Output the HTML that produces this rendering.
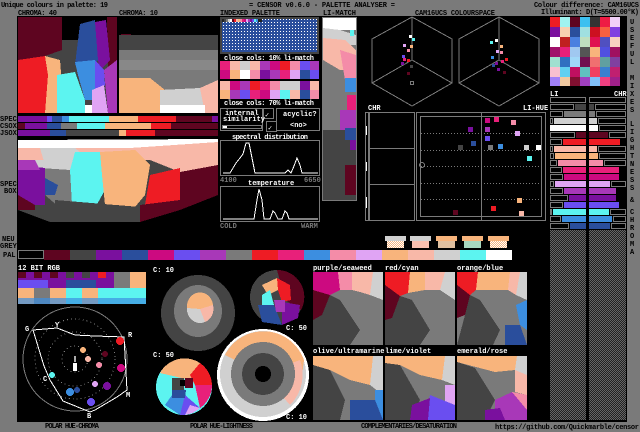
<!DOCTYPE html>
<html><head><meta charset="utf-8"><style>
html,body{margin:0;padding:0;background:#7a7a7a;}
svg{display:block}
text{font-family:"Liberation Mono",monospace;font-size:7px;font-weight:bold;}
</style></head><body>
<svg width="640" height="432" viewBox="0 0 640 432" xmlns="http://www.w3.org/2000/svg" shape-rendering="crispEdges">
<defs>
<pattern id="ck" width="2" height="2" patternUnits="userSpaceOnUse"><rect width="2" height="2" fill="#222"/><rect width="1" height="1" fill="#666"/><rect x="1" y="1" width="1" height="1" fill="#666"/></pattern>
<pattern id="dots" width="3" height="3" patternUnits="userSpaceOnUse"><rect width="3" height="3" fill="#2a4e9c"/><rect x="1" y="1" width="1" height="1" fill="#fff"/></pattern>
<pattern id="ckp" width="2" height="2" patternUnits="userSpaceOnUse"><rect width="2" height="2" fill="#f8b47c"/><rect width="1" height="1" fill="#fff"/><rect x="1" y="1" width="1" height="1" fill="#fff"/></pattern>
</defs>
<rect width="640" height="432" fill="#7a7a7a"/>
<text x="1" y="7" textLength="107">Unique colours in palette: 19</text>
<text x="249" y="7" textLength="146">= CENSOR v0.6.0 - PALETTE ANALYSER =</text>
<text x="534" y="7" textLength="105">Colour difference: CAM16UCS</text>
<text x="541" y="14" textLength="98">Illuminant: D(T=5500.00°K)</text>
<text x="18" y="15" textLength="39">CHROMA: 40</text>
<text x="119" y="15" textLength="39">CHROMA: 10</text>
<text x="220" y="15" textLength="60">INDEXED PALETTE</text>
<text x="323" y="15" textLength="33">LI-MATCH</text>
<text x="415" y="15" textLength="80">CAM16UCS COLOURSPACE</text>
<rect x="17" y="16" width="610" height="406" fill="#000"/>
<text x="0" y="121">SPEC</text><text x="0" y="128">CSOX</text><text x="0" y="135">JSOX</text>
<text x="0" y="186">SPEC</text><text x="4" y="193">BOX</text>
<text x="2" y="241">NEU</text><text x="0" y="248">GREY</text><text x="3" y="257">PAL</text>

<g>
<rect x="18" y="17" width="99" height="96" fill="#444"/>
<polygon points="18,17 62,17 62,50 45,56 18,60" fill="#5e0520"/>
<polygon points="62,17 117,17 117,40 62,40" fill="#000"/>
<polygon points="107,17 117,17 117,113 110,113 108,70" fill="#5e0520"/>
<polygon points="80,24 95,20 98,60 90,70 75,65" fill="#2a4e9c"/>
<polygon points="95,22 106,20 110,60 100,70 98,60" fill="#7a109e"/>
<polygon points="18,60 45,56 50,75 45,113 18,113" fill="#ee1c24"/>
<polygon points="45,56 60,60 62,85 57,113 45,113 48,75" fill="#f8b47c"/>
<polygon points="57,75 75,72 85,100 85,113 57,113" fill="#5cf4f0"/>
<polygon points="75,62 95,60 95,100 85,100 78,75" fill="#3c8ee0"/>
<polygon points="95,60 104,70 105,85 95,100" fill="#6a4ef0"/>
<polygon points="92,90 104,85 108,113 92,113" fill="#e0a4f4"/>
<polygon points="104,70 117,60 117,113 108,113" fill="#a838b8"/>
<polygon points="85,105 92,105 92,113 85,113" fill="#fff"/>
</g>
<g>
<rect x="119" y="17" width="99" height="96" fill="#7a7a7a"/>
<rect x="119" y="17" width="99" height="18" fill="#000"/>
<rect x="121" y="34" width="10" height="4" fill="#5e0520"/>
<rect x="119" y="35" width="99" height="15" fill="#444"/>
<rect x="119" y="60" width="99" height="10" fill="#888"/>
<polygon points="119,78 150,78 165,90 160,113 119,113" fill="#f8b47c"/>
<polygon points="160,90 200,88 205,105 160,105" fill="#d0d0d0"/>
<polygon points="200,88 218,80 218,113 205,113" fill="#f8b8a8"/>
<rect x="160" y="105" width="45" height="8" fill="#fff"/>
</g>
<g>
<rect x="18" y="116" width="200" height="6" fill="#5e0520"/>
<rect x="18" y="116" width="29" height="6" fill="#7a109e"/><rect x="47" y="116" width="5" height="6" fill="#6a4ef0"/><rect x="52" y="116" width="10" height="6" fill="#2a4e9c"/><rect x="62" y="116" width="7" height="6" fill="#3c8ee0"/><rect x="69" y="116" width="40" height="6" fill="#5cf4f0"/><rect x="109" y="116" width="29" height="6" fill="#f8b47c"/><rect x="138" y="116" width="38" height="6" fill="#ee1c24"/><rect x="212" y="116" width="6" height="6" fill="#7a109e"/>
<rect x="18" y="123" width="200" height="6" fill="#5e0520"/>
<rect x="25" y="123" width="22" height="6" fill="#7a109e"/><rect x="47" y="123" width="14" height="6" fill="#2a4e9c"/><rect x="61" y="123" width="16" height="6" fill="#7a7a7a"/><rect x="77" y="123" width="28" height="6" fill="#5cf4f0"/><rect x="105" y="123" width="46" height="6" fill="#f8b47c"/><rect x="151" y="123" width="20" height="6" fill="#ee1c24"/>
<rect x="18" y="130" width="200" height="6" fill="#5e0520"/>
<rect x="18" y="130" width="32" height="6" fill="#7a109e"/><rect x="50" y="130" width="16" height="6" fill="#2a4e9c"/><rect x="66" y="130" width="53" height="6" fill="#444"/><rect x="119" y="130" width="7" height="6" fill="#f8b47c"/><rect x="126" y="130" width="29" height="6" fill="#ee1c24"/>
</g>
<g>
<rect x="18" y="139" width="200" height="83" fill="#000"/>
<polygon points="18,140 218,139 218,170 180,175 150,200 140,222 50,222 18,210" fill="#444"/>
<polygon points="18,140 70,140 80,160 60,180 40,190 18,175" fill="#d0d0d0"/>
<polygon points="18,140 40,140 45,160 18,160" fill="#f8b8a8"/>
<polygon points="18,140 218,139 218,148 18,148" fill="#fff"/>
<polygon points="40,148 130,148 218,142 218,168 180,172 150,160 110,162 70,165" fill="#f8b8a8"/>
<polygon points="40,148 75,148 90,160 60,170 45,165" fill="#d0d0d0"/>
<polygon points="75,152 100,152 105,190 95,208 72,205 70,170" fill="#5cf4f0"/>
<polygon points="100,152 135,150 150,165 145,195 135,207 105,205 102,175" fill="#f8b47c"/>
<polygon points="40,168 70,170 72,205 60,208 45,195" fill="#7a7a7a"/>
<polygon points="18,165 45,168 45,205 35,205 18,195" fill="#7a109e"/>
<polygon points="18,160 35,160 40,170 18,170" fill="#a838b8"/>
<polygon points="45,178 58,185 55,195 45,195" fill="#2a4e9c"/>
<polygon points="150,175 180,168 182,200 170,210 145,205" fill="#ee1c24"/>
<polygon points="180,172 218,165 218,185 180,200" fill="#5e0520"/>
<polygon points="140,205 180,200 218,185 218,195 180,210 140,222" fill="#5e0520"/>
<polygon points="18,195 35,205 35,210 18,210" fill="#5e0520"/>
<polygon points="55,200 140,207 138,222 55,220" fill="#444"/>
</g>
<rect x="220" y="17" width="99" height="37" fill="#444"/>
<rect x="222" y="19" width="95" height="33" fill="url(#dots)"/>
<g>
<rect x="222" y="19" width="40" height="3" fill="#222"/>
<rect x="224" y="19" width="2" height="3" fill="#444"/><rect x="226" y="19" width="2" height="3" fill="#7a7a7a"/><rect x="228" y="19" width="2" height="3" fill="#d0d0d0"/><rect x="230" y="19" width="2" height="3" fill="#fff"/><rect x="232" y="19" width="2" height="3" fill="#5e0520"/><rect x="234" y="19" width="2" height="3" fill="#ee1c24"/><rect x="236" y="19" width="2" height="3" fill="#f8b8a8"/><rect x="238" y="19" width="2" height="3" fill="#f8b47c"/><rect x="240" y="19" width="2" height="3" fill="#f48ca8"/><rect x="242" y="19" width="2" height="3" fill="#e8207a"/><rect x="244" y="19" width="2" height="3" fill="#cc0a80"/><rect x="246" y="19" width="2" height="3" fill="#e0a4f4"/><rect x="248" y="19" width="2" height="3" fill="#a838b8"/><rect x="250" y="19" width="2" height="3" fill="#7a109e"/><rect x="252" y="19" width="2" height="3" fill="#6a4ef0"/><rect x="254" y="19" width="2" height="3" fill="#5cf4f0"/><rect x="256" y="19" width="2" height="3" fill="#3c8ee0"/>
</g>
<text x="224" y="60" fill="#fff" textLength="90">close cols: 10% li-match</text>
<g>
<rect x="220" y="61" width="10" height="9" fill="#e8207a"/><rect x="220" y="70" width="10" height="9" fill="#cc0a80"/>
<rect x="230" y="61" width="10" height="9" fill="#f8b8a8"/><rect x="230" y="70" width="10" height="9" fill="#f8b47c"/>
<rect x="240" y="61" width="10" height="9" fill="#d0d0d0"/><rect x="240" y="70" width="10" height="9" fill="#fff"/>
<rect x="250" y="61" width="10" height="9" fill="#f8b8a8"/><rect x="250" y="70" width="10" height="9" fill="#f48ca8"/>
<rect x="260" y="61" width="10" height="9" fill="#a838b8"/><rect x="260" y="70" width="10" height="9" fill="#7a109e"/>
<rect x="270" y="61" width="10" height="9" fill="#cc0a80"/><rect x="270" y="70" width="10" height="9" fill="#a838b8"/>
<rect x="280" y="61" width="10" height="9" fill="#ee1c24"/><rect x="280" y="70" width="10" height="9" fill="#e8207a"/>
<rect x="290" y="61" width="10" height="9" fill="#f48ca8"/><rect x="290" y="70" width="10" height="9" fill="#e0a4f4"/>
<rect x="300" y="61" width="10" height="9" fill="#6a4ef0"/><rect x="300" y="70" width="10" height="9" fill="#2a4e9c"/>
<rect x="310" y="61" width="9" height="9" fill="#a838b8"/><rect x="310" y="70" width="9" height="9" fill="#6a4ef0"/>
<rect x="220" y="81" width="10" height="9" fill="#f8b8a8"/><rect x="220" y="90" width="10" height="9" fill="#f8b47c"/>
<rect x="230" y="81" width="10" height="9" fill="#cc0a80"/><rect x="230" y="90" width="10" height="9" fill="#a838b8"/>
<rect x="240" y="81" width="10" height="9" fill="#a838b8"/><rect x="240" y="90" width="10" height="9" fill="#6a4ef0"/>
<rect x="250" y="81" width="10" height="9" fill="#ee1c24"/><rect x="250" y="90" width="10" height="9" fill="#e8207a"/>
<rect x="260" y="81" width="10" height="9" fill="#e8207a"/><rect x="260" y="90" width="10" height="9" fill="#cc0a80"/>
<rect x="270" y="81" width="10" height="9" fill="#f48ca8"/><rect x="270" y="90" width="10" height="9" fill="#e0a4f4"/>
<rect x="280" y="81" width="10" height="9" fill="#d0d0d0"/><rect x="280" y="90" width="10" height="9" fill="#5cf4f0"/>
<rect x="290" y="81" width="10" height="9" fill="#d0d0d0"/><rect x="290" y="90" width="10" height="9" fill="#f8b8a8"/>
<rect x="300" y="81" width="10" height="9" fill="#7a109e"/><rect x="300" y="90" width="10" height="9" fill="#2a4e9c"/>
<rect x="310" y="81" width="9" height="9" fill="#f8b8a8"/><rect x="310" y="90" width="9" height="9" fill="#f48ca8"/>
</g>
<text x="224" y="105" fill="#fff" textLength="90">close cols: 70% li-match</text>
<g fill="none" stroke="#7a7a7a">
<rect x="220.5" y="108.5" width="42" height="22"/>
<rect x="263.5" y="108.5" width="10" height="10"/>
<rect x="266.5" y="121.5" width="10" height="10"/>
<rect x="276.5" y="108.5" width="43" height="22"/>
<rect x="222.5" y="125.5" width="39" height="3"/>
<rect x="220.5" y="140.5" width="99" height="35"/>
<rect x="220.5" y="186.5" width="99" height="35"/>
<rect x="322.5" y="17.5" width="34" height="183"/>
</g>
<rect x="223" y="126" width="4" height="2" fill="#fff"/>
<text x="225" y="115" fill="#fff">internal</text><text x="223" y="121" fill="#fff">similarity</text>
<text x="265" y="117" fill="#fff">✓</text><text x="268" y="130" fill="#fff">✓</text>
<text x="283" y="116" fill="#fff">acyclic?</text><text x="290" y="127" fill="#fff">&lt;no&gt;</text>
<text x="232" y="139" fill="#fff" textLength="76">spectral distribution</text>
<text x="220" y="182" fill="#7a7a7a">4100</text><text x="304" y="182" fill="#7a7a7a">6650</text>
<text x="248" y="185" fill="#fff">temperature</text>
<text x="220" y="228" fill="#7a7a7a">COLD</text><text x="301" y="228" fill="#7a7a7a">WARM</text>
<polyline fill="none" stroke="#fff" points="223,173 230,173 236,163 240,158 243,154 246,143 249,143 252,158 255,173 285,173 288,170 291,173 294,166 297,158 300,165 302,173 318,173"/>
<polyline fill="none" stroke="#fff" points="223,219 254,219 257,200 259,189 262,200 264,219 270,219 273,211 275,213 278,219 282,219 285,211 287,213 289,219 318,219"/>
<g>
<rect x="323" y="18" width="33" height="182" fill="#7a7a7a"/>
<rect x="323" y="18" width="33" height="12" fill="#fff"/>
<polygon points="323,28 340,30 356,35 356,45 323,45" fill="#d0d0d0"/>
<polygon points="323,38 345,40 356,50 356,70 340,70 323,60" fill="#f8b8a8"/>
<polygon points="340,50 356,55 356,80 345,80" fill="#f48ca8"/>
<rect x="345" y="78" width="11" height="14" fill="#3c8ee0"/>
<polygon points="323,60 340,70 345,90 340,110 323,120" fill="#7a7a7a"/>
<rect x="347" y="95" width="9" height="20" fill="#e8207a"/>
<rect x="340" y="110" width="16" height="20" fill="#a838b8"/>
<rect x="323" y="130" width="33" height="70" fill="#444"/>
<rect x="345" y="128" width="11" height="12" fill="#2a4e9c"/>
<rect x="350" y="140" width="6" height="10" fill="#7a109e"/>
<rect x="345" y="165" width="11" height="30" fill="#5e0520"/>
<rect x="350" y="30" width="4" height="6" fill="#5cf4f0"/>
</g>
<g fill="none" stroke="#7a7a7a">
<polygon points="412,17 452,39 452,83 412,106 372,83 372,39"/>
<line x1="412" y1="17" x2="412" y2="60"/><line x1="412" y1="60" x2="452" y2="83"/>
<line x1="412" y1="60" x2="372" y2="83"/>
<polygon points="499,17 539,39 539,83 499,106 459,83 459,39"/>
<line x1="499" y1="17" x2="499" y2="60"/><line x1="499" y1="60" x2="539" y2="83"/><line x1="499" y1="60" x2="459" y2="83"/>
<rect x="410.5" y="81.5" width="3" height="3"/>
</g>
<g>
<rect x="409" y="35" width="3" height="3" fill="#fff"/><rect x="412" y="38" width="3" height="3" fill="#5cf4f0"/><rect x="403" y="44" width="3" height="3" fill="#e0a4f4"/><rect x="410" y="45" width="3" height="3" fill="#f8b47c"/><rect x="407" y="49" width="3" height="3" fill="#f48ca8"/><rect x="402" y="55" width="3" height="3" fill="#6a4ef0"/><rect x="403" y="58" width="3" height="3" fill="#e8207a"/><rect x="407" y="59" width="3" height="3" fill="#ee1c24"/><rect x="401" y="62" width="3" height="3" fill="#7a109e"/><rect x="410" y="65" width="3" height="3" fill="#444"/><rect x="407" y="72" width="3" height="3" fill="#5e0520"/>
<rect x="495" y="39" width="3" height="3" fill="#fff"/><rect x="490" y="41" width="3" height="3" fill="#5cf4f0"/><rect x="500" y="45" width="3" height="3" fill="#f8b47c"/><rect x="496" y="50" width="3" height="3" fill="#e0a4f4"/><rect x="500" y="51" width="3" height="3" fill="#f48ca8"/><rect x="491" y="56" width="3" height="3" fill="#3c8ee0"/><rect x="505" y="58" width="3" height="3" fill="#ee1c24"/><rect x="501" y="60" width="3" height="3" fill="#e8207a"/><rect x="495" y="62" width="3" height="3" fill="#7a109e"/><rect x="492" y="64" width="3" height="3" fill="#2a4e9c"/><rect x="497" y="68" width="3" height="3" fill="#7a109e"/><rect x="503" y="71" width="3" height="3" fill="#5e0520"/>
</g>
<text x="368" y="110" fill="#fff">CHR</text><text x="523" y="110" fill="#fff">LI-HUE</text>
<g fill="none" stroke="#7a7a7a">
<rect x="365.5" y="112.5" width="3" height="108"/>
<rect x="369.5" y="112.5" width="45" height="108"/>
<line x1="369" y1="148.5" x2="415" y2="148.5"/><line x1="369" y1="184.5" x2="415" y2="184.5"/>
<rect x="416.5" y="112.5" width="129" height="108"/>
<rect x="420.5" y="116.5" width="121" height="100"/>
<line x1="481.5" y1="113" x2="481.5" y2="221"/>
<circle cx="422" cy="165" r="2.5"/>
</g>
<g stroke="#7a7a7a" stroke-dasharray="1 2">
<line x1="421" y1="133.5" x2="541" y2="133.5"/><line x1="421" y1="150.5" x2="541" y2="150.5"/><line x1="421" y1="166.5" x2="541" y2="166.5"/><line x1="421" y1="183.5" x2="541" y2="183.5"/><line x1="421" y1="199.5" x2="541" y2="199.5"/>
</g>
<rect x="366" y="126" width="1" height="9" fill="#fff"/><rect x="366" y="162" width="1" height="9" fill="#fff"/><rect x="366" y="197" width="1" height="11" fill="#fff"/>
<g>
<rect x="485" y="118" width="5" height="5" fill="#cc0a80"/><rect x="494" y="117" width="5" height="5" fill="#e8207a"/><rect x="511" y="120" width="5" height="5" fill="#f48ca8"/><rect x="468" y="127" width="5" height="5" fill="#7a109e"/><rect x="485" y="127" width="5" height="5" fill="#a838b8"/><rect x="515" y="131" width="5" height="5" fill="#e0a4f4"/><rect x="485" y="136" width="5" height="5" fill="#6a4ef0"/><rect x="471" y="141" width="5" height="5" fill="#2a4e9c"/><rect x="458" y="145" width="5" height="5" fill="#444"/><rect x="488" y="145" width="5" height="5" fill="#7a7a7a"/><rect x="498" y="144" width="5" height="5" fill="#3c8ee0"/><rect x="524" y="145" width="5" height="5" fill="#d0d0d0"/><rect x="536" y="145" width="5" height="5" fill="#fff"/><rect x="527" y="156" width="5" height="5" fill="#5cf4f0"/><rect x="517" y="198" width="5" height="5" fill="#f8b47c"/><rect x="453" y="210" width="5" height="5" fill="#5e0520"/><rect x="491" y="206" width="5" height="5" fill="#ee1c24"/><rect x="519" y="211" width="5" height="5" fill="#f8b8a8"/>
</g>
<g>
<rect x="550" y="17" width="76" height="69" fill="#444"/>
<rect x="550" y="17" width="10" height="10" fill="#ee1c24"/><rect x="560" y="17" width="10" height="10" fill="#a0f4f0"/><rect x="570" y="17" width="10" height="10" fill="#5e0520"/><rect x="580" y="17" width="10" height="10" fill="#3cc0f0"/><rect x="590" y="17" width="10" height="10" fill="#333"/><rect x="600" y="17" width="10" height="10" fill="#ee1c44"/><rect x="610" y="17" width="10" height="10" fill="#f0d0f8"/>
<rect x="550" y="27" width="10" height="10" fill="#7a109e"/><rect x="560" y="27" width="10" height="10" fill="#f8d0b0"/><rect x="570" y="27" width="10" height="10" fill="#2a4e9c"/><rect x="580" y="27" width="10" height="10" fill="#a0e0e0"/><rect x="590" y="27" width="10" height="10" fill="#cc1020"/><rect x="600" y="27" width="10" height="10" fill="#f86040"/><rect x="610" y="27" width="10" height="10" fill="#8040e0"/>
<rect x="550" y="37" width="10" height="10" fill="#fff"/><rect x="560" y="37" width="10" height="10" fill="#c02020"/><rect x="570" y="37" width="10" height="10" fill="#4a80e0"/><rect x="580" y="37" width="10" height="10" fill="#c0e0c0"/><rect x="590" y="37" width="10" height="10" fill="#e01050"/><rect x="600" y="37" width="10" height="10" fill="#5050c0"/><rect x="610" y="37" width="10" height="10" fill="#f8d0c0"/>
<rect x="550" y="47" width="10" height="10" fill="#a0106a"/><rect x="560" y="47" width="10" height="10" fill="#e8207a"/><rect x="570" y="47" width="10" height="10" fill="#a0c8f0"/><rect x="580" y="47" width="10" height="10" fill="#555"/><rect x="590" y="47" width="10" height="10" fill="#f8b47c"/><rect x="600" y="47" width="10" height="10" fill="#5050e0"/><rect x="610" y="47" width="10" height="10" fill="#a01060"/>
<rect x="550" y="57" width="10" height="10" fill="#a0e0d0"/><rect x="560" y="57" width="10" height="10" fill="#3070c0"/><rect x="570" y="57" width="10" height="10" fill="#a0d8f8"/><rect x="580" y="57" width="10" height="10" fill="#701050"/><rect x="590" y="57" width="10" height="10" fill="#f07070"/><rect x="600" y="57" width="10" height="10" fill="#60a0a0"/><rect x="610" y="57" width="10" height="10" fill="#8040a0"/>
<rect x="550" y="67" width="10" height="10" fill="#f8c0d0"/><rect x="560" y="67" width="10" height="10" fill="#60d0f0"/><rect x="570" y="67" width="10" height="10" fill="#c01060"/><rect x="580" y="67" width="10" height="10" fill="#60c0c0"/><rect x="590" y="67" width="10" height="10" fill="#f04060"/><rect x="600" y="67" width="10" height="10" fill="#3a80d0"/><rect x="610" y="67" width="10" height="10" fill="#c02070"/>
<rect x="550" y="77" width="10" height="9" fill="#a080f8"/><rect x="560" y="77" width="10" height="9" fill="#f0c8a0"/><rect x="570" y="77" width="10" height="9" fill="#801030"/><rect x="580" y="77" width="10" height="9" fill="#a040c0"/><rect x="590" y="77" width="10" height="9" fill="#80c0f8"/><rect x="600" y="77" width="10" height="9" fill="#f04080"/><rect x="610" y="77" width="10" height="9" fill="#a0208a"/>
<rect x="620" y="17" width="6" height="69" fill="#000"/>
</g>
<g fill="#000">
<text x="630" y="24">U</text><text x="630" y="32">S</text><text x="630" y="40">E</text><text x="630" y="48">F</text><text x="630" y="56">U</text><text x="630" y="64">L</text>
<text x="630" y="80">M</text><text x="630" y="88">I</text><text x="630" y="96">X</text><text x="630" y="104">E</text><text x="630" y="112">S</text>
<text x="630" y="126">L</text><text x="630" y="134">I</text><text x="630" y="142">G</text><text x="630" y="150">H</text><text x="630" y="158">T</text><text x="630" y="166">N</text><text x="630" y="174">E</text><text x="630" y="182">S</text><text x="630" y="190">S</text>
<text x="630" y="202">&amp;</text>
<text x="630" y="214">C</text><text x="630" y="222">H</text><text x="630" y="230">R</text><text x="630" y="238">O</text><text x="630" y="246">M</text><text x="630" y="254">A</text>
</g>
<text x="550" y="96" fill="#fff">LI</text><text x="614" y="96" fill="#fff">CHR</text>
<rect x="550" y="230" width="36" height="190" fill="url(#ck)"/>
<rect x="589" y="230" width="37" height="190" fill="url(#ck)"/>
<g>
<rect x="385" y="236" width="21" height="5" fill="#d0d0d0"/><rect x="387" y="241" width="17" height="7" fill="url(#ckp)"/>
<rect x="410" y="236" width="21" height="5" fill="#d0d0d0"/><rect x="412" y="241" width="17" height="7" fill="#f8c0b0"/>
<rect x="436" y="236" width="21" height="5" fill="#f8b47c"/><rect x="438" y="241" width="17" height="7" fill="#e0c0a0"/>
<rect x="462" y="236" width="21" height="5" fill="#f8b47c"/><rect x="464" y="241" width="17" height="7" fill="#a8d8c0"/>
<rect x="488" y="236" width="21" height="5" fill="#f8b47c"/><rect x="490" y="241" width="17" height="7" fill="url(#ckp)"/>
</g>
<g>
<rect x="18.5" y="250.5" width="25" height="8" fill="#000" stroke="#7a7a7a"/>
<rect x="44" y="250" width="26" height="10" fill="#5e0520"/><rect x="70" y="250" width="26" height="10" fill="#444"/><rect x="96" y="250" width="26" height="10" fill="#7a109e"/><rect x="122" y="250" width="26" height="10" fill="#2a4e9c"/><rect x="148" y="250" width="26" height="10" fill="#cc0a80"/><rect x="174" y="250" width="26" height="10" fill="#6a4ef0"/><rect x="200" y="250" width="26" height="10" fill="#a838b8"/><rect x="226" y="250" width="26" height="10" fill="#7a7a7a"/><rect x="252" y="250" width="26" height="10" fill="#ee1c24"/><rect x="278" y="250" width="26" height="10" fill="#e8207a"/><rect x="304" y="250" width="26" height="10" fill="#3c8ee0"/><rect x="330" y="250" width="26" height="10" fill="#f48ca8"/><rect x="356" y="250" width="26" height="10" fill="#e0a4f4"/><rect x="382" y="250" width="26" height="10" fill="#f8b47c"/><rect x="408" y="250" width="26" height="10" fill="#f8b8a8"/><rect x="434" y="250" width="26" height="10" fill="#d0d0d0"/><rect x="460" y="250" width="26" height="10" fill="#5cf4f0"/><rect x="486" y="250" width="26" height="10" fill="#fff"/>
</g>
<text x="18" y="270" fill="#fff">12 BIT RGB</text>
<g>
<rect x="18" y="272" width="128" height="16" fill="#7a109e"/>
<rect x="18" y="288" width="128" height="16" fill="#f8b47c"/>
<rect x="34" y="288" width="16" height="16" fill="#7a7a7a"/><rect x="66" y="288" width="16" height="16" fill="#5cf4f0"/><rect x="82" y="288" width="16" height="16" fill="#f8b47c"/><rect x="98" y="288" width="48" height="16" fill="#5cf4f0"/>
<rect x="18" y="298" width="128" height="6" fill="#3c8ee0" opacity=".7"/>
<rect x="18" y="272" width="8" height="6" fill="#5e0520"/><rect x="34" y="272" width="8" height="6" fill="#5e0520"/><rect x="50" y="272" width="8" height="6" fill="#5e0520"/><rect x="66" y="272" width="8" height="6" fill="#444"/><rect x="82" y="272" width="8" height="6" fill="#444"/><rect x="98" y="272" width="8" height="6" fill="#ee1c24"/><rect x="114" y="272" width="16" height="16" fill="#7a7a7a"/><rect x="130" y="272" width="16" height="16" fill="#f8b47c"/>
<rect x="18" y="280" width="30" height="8" fill="#6a4ef0"/><rect x="66" y="280" width="30" height="8" fill="#2a4e9c"/>
</g>
<g fill="none">
<circle cx="75" cy="359" r="52" stroke="#7a7a7a"/>
<circle cx="75" cy="359" r="40" stroke="#7a7a7a" stroke-dasharray="1 3"/>
<circle cx="75" cy="359" r="27" stroke="#7a7a7a" stroke-dasharray="1 3"/>
<circle cx="75" cy="359" r="13" stroke="#7a7a7a" stroke-dasharray="1 3"/>
<polyline stroke="#fff" points="33,330 57,328 75,335 95,336 124,337 127,390 117,397 95,410 90,412 63,401 50,380 44,366 33,330"/>
</g>
<text x="25" y="331" fill="#fff">G</text><text x="55" y="327" fill="#fff">Y</text><text x="128" y="337" fill="#fff">R</text><text x="43" y="381" fill="#fff">C</text><text x="126" y="397" fill="#fff">M</text><text x="87" y="418" fill="#fff">B</text>
<g>
<circle cx="120" cy="341" r="4" fill="#ee1c24"/><circle cx="83" cy="350" r="3" fill="#f8b47c"/><circle cx="105" cy="354" r="3" fill="#5e0520"/><circle cx="88" cy="359" r="3" fill="#f8b8a8"/><circle cx="99" cy="365" r="3" fill="#f48ca8"/><circle cx="121" cy="368" r="4" fill="#cc0a80"/><circle cx="52" cy="375" r="3" fill="#5cf4f0"/><circle cx="95" cy="384" r="3" fill="#e0a4f4"/><circle cx="107" cy="386" r="4" fill="#7a109e"/><circle cx="70" cy="392" r="4" fill="#3c8ee0"/><circle cx="77" cy="390" r="3" fill="#2a4e9c"/><circle cx="91" cy="402" r="4" fill="#6a4ef0"/><rect x="73" y="363" width="4" height="8" fill="#fff"/><rect x="74" y="356" width="2" height="6" fill="#aaa"/>
</g>
<text x="153" y="272" fill="#fff">C: 10</text>
<ellipse cx="198" cy="313" rx="37" ry="38" fill="#444"/>
<ellipse cx="198" cy="311" rx="24" ry="26" fill="#7a7a7a"/>
<ellipse cx="200" cy="309" rx="13" ry="14" fill="#d0d0d0"/>
<path d="M187,308 A13,14 0 0 1 213,305 L200,309 Z" fill="#f8b47c"/>
<path d="M213,305 A13,14 0 0 1 205,322 L200,309 Z" fill="#f8b8a8"/>
<circle cx="277" cy="297" r="27" fill="#444"/>
<path d="M277,270 A27,27 0 0 1 301,310 L285,300 Z" fill="#5e0520"/>
<path d="M277,278 L290,285 L291,300 L282,302 L278,290 Z" fill="#ee1c24"/>
<path d="M262,285 L277,278 L278,290 L268,295 Z" fill="#f8b47c"/>
<path d="M262,295 L270,290 L274,305 L262,308 Z" fill="#5cf4f0"/>
<path d="M258,305 L274,305 L282,325 L262,322 Z" fill="#2a4e9c"/>
<path d="M282,302 L300,305 L298,318 L282,325 Z" fill="#7a109e"/>
<path d="M274,300 L285,300 L285,312 L276,312 Z" fill="#a838b8"/>
<text x="286" y="330" fill="#fff">C: 50</text>
<text x="153" y="357" fill="#fff">C: 50</text>
<circle cx="184" cy="387" r="28" fill="#5cf4f0"/>
<path d="M160,373 A28,28 0 0 1 200,363 L190,380 Z" fill="#f8b47c"/>
<path d="M190,375 L200,363 A28,28 0 0 1 212,385 L195,385 Z" fill="#ee1c24"/>
<path d="M195,385 L212,385 A28,28 0 0 1 200,408 Z" fill="#e8207a"/>
<path d="M185,395 L200,408 A28,28 0 0 1 180,415 Z" fill="#6a4ef0"/>
<path d="M190,405 L200,408 A28,28 0 0 1 185,415 Z" fill="#e0a4f4"/>
<path d="M172,395 L185,395 L180,415 L165,405 Z" fill="#3c8ee0"/>
<path d="M172,388 L186,390 L185,398 L172,398 Z" fill="#2a4e9c"/>
<rect x="172" y="378" width="12" height="12" fill="#444"/><rect x="180" y="380" width="5" height="6" fill="#000"/><rect x="185" y="378" width="8" height="10" fill="#5e0520"/>
<circle cx="263" cy="375" r="46" fill="#fff"/>
<circle cx="263" cy="374" r="43" fill="#d0d0d0"/>
<path d="M225,355 A43,43 0 0 1 304,360 L300,390 L263,374 Z" fill="#f8b47c"/>
<path d="M300,360 A43,43 0 0 1 290,405 L263,374 Z" fill="#f8b8a8"/>
<circle cx="263" cy="374" r="32" fill="#7a7a7a"/>
<circle cx="263" cy="374" r="21" fill="#444"/>
<circle cx="263" cy="374" r="8" fill="#000"/>
<text x="286" y="419" fill="#fff">C: 10</text>
<text x="313" y="270" fill="#fff">purple/seaweed</text><text x="385" y="270" fill="#fff">red/cyan</text><text x="457" y="270" fill="#fff">orange/blue</text>
<text x="313" y="353" fill="#fff">olive/ultramarine</text><text x="385" y="353" fill="#fff">lime/violet</text><text x="457" y="353" fill="#fff">emerald/rose</text>
<g>
<rect x="313" y="272" width="70" height="73" fill="#7a7a7a"/>
<polygon points="313,272 338,272 340,290 330,295 313,290" fill="#cc0a80"/><polygon points="338,272 352,272 352,290 340,290" fill="#f48ca8"/><polygon points="352,272 373,272 370,295 360,292 352,290" fill="#f8b8a8"/><polygon points="373,272 383,272 383,300 370,295" fill="#d0d0d0"/>
<polygon points="313,290 330,295 322,315 313,320" fill="#5e0520"/><polygon points="322,315 330,295 340,300 360,330 350,345 313,345 313,320" fill="#444"/>
<rect x="385" y="272" width="70" height="73" fill="#7a7a7a"/>
<polygon points="385,272 410,272 408,293 400,296 385,285" fill="#ee1c24"/><polygon points="410,272 425,272 425,290 408,293" fill="#f8b47c"/><polygon points="425,272 445,272 440,290 425,290" fill="#f8b8a8"/><polygon points="445,272 455,272 455,300 440,290" fill="#d0d0d0"/>
<polygon points="385,285 400,296 392,318 385,320" fill="#5e0520"/><polygon points="392,318 400,296 412,300 430,330 420,345 385,345 385,320" fill="#444"/>
<rect x="457" y="272" width="70" height="73" fill="#7a7a7a"/>
<polygon points="457,272 478,272 476,290 470,295 457,285" fill="#ee1c24"/><polygon points="478,272 510,272 508,290 476,290" fill="#f8b47c"/><polygon points="510,272 520,272 516,295 508,290" fill="#f8b8a8"/><polygon points="520,272 527,272 527,300 516,295" fill="#d0d0d0"/>
<polygon points="457,285 470,295 465,315 457,318" fill="#5e0520"/><polygon points="465,315 470,295 480,300 500,330 493,345 457,345" fill="#444"/>
<polygon points="516,305 527,300 527,330 520,325" fill="#3c8ee0"/><polygon points="505,325 520,325 527,345 505,345" fill="#2a4e9c"/>
<rect x="313" y="356" width="70" height="64" fill="#7a7a7a"/>
<polygon points="313,356 373,356 370,385 350,380 330,370 313,365" fill="#f8b47c"/><polygon points="373,356 383,356 383,395 370,385" fill="#d0d0d0"/>
<polygon points="313,365 330,370 345,400 340,420 313,420" fill="#444"/><polygon points="375,390 383,390 383,420 375,420" fill="#3c8ee0"/><polygon points="350,400 375,400 383,420 350,420" fill="#2a4e9c"/>
<rect x="385" y="356" width="70" height="64" fill="#7a7a7a"/>
<polygon points="385,356 445,356 442,380 420,375 400,365 385,363" fill="#f8b47c"/><polygon points="445,356 455,356 455,385 442,380" fill="#d0d0d0"/>
<polygon points="385,363 400,365 420,400 410,420 385,420" fill="#444"/><polygon points="445,385 455,385 455,410 445,405" fill="#e0a4f4"/><polygon points="430,395 455,405 455,420 425,420" fill="#6a4ef0"/><polygon points="412,405 430,398 428,420 410,420" fill="#7a109e"/>
<rect x="457" y="356" width="70" height="64" fill="#7a7a7a"/>
<polygon points="457,356 517,356 515,370 495,372 457,362" fill="#f8b47c"/><polygon points="517,356 527,356 527,375 515,370" fill="#d0d0d0"/><polygon points="515,370 527,375 527,395 515,392" fill="#f8b8a8"/><polygon points="512,392 527,395 527,410 512,405" fill="#f48ca8"/>
<polygon points="457,362 475,368 495,400 485,420 457,420" fill="#444"/><polygon points="495,400 512,392 527,410 527,420 495,420" fill="#a838b8"/><polygon points="485,410 500,408 505,420 485,420" fill="#7a109e"/>
</g>
<text x="45" y="428" textLength="54">POLAR HUE-CHROMA</text>
<text x="190" y="428" textLength="63">POLAR HUE-LIGHTNESS</text>
<text x="361" y="428" textLength="96">COMPLEMENTARIES/DESATURATION</text>
<text x="495" y="429" textLength="144">https://github.com/Quickmarble/censor</text>
<g fill="none" stroke="#7a7a7a">
<rect x="550.5" y="97.5" width="35" height="5"/><rect x="589.5" y="97.5" width="36" height="5"/>
</g>
<g>
<rect x="550.5" y="104.5" width="23" height="5" fill="none" stroke="#7a7a7a"/><rect x="575" y="104" width="11" height="6" fill="#444"/><rect x="589" y="104" width="5" height="6" fill="#444"/><rect x="595.5" y="104.5" width="30" height="5" fill="none" stroke="#7a7a7a"/>
<rect x="550.5" y="111.5" width="12" height="5" fill="none" stroke="#7a7a7a"/><rect x="564" y="111" width="22" height="6" fill="#7a7a7a"/><rect x="589" y="111" width="6" height="6" fill="#7a7a7a"/><rect x="596.5" y="111.5" width="29" height="5" fill="none" stroke="#7a7a7a"/>
<rect x="550.5" y="118.5" width="2" height="5" fill="none" stroke="#7a7a7a"/><rect x="554" y="118" width="32" height="6" fill="#d0d0d0"/><rect x="589" y="118" width="8" height="6" fill="#d0d0d0"/><rect x="598.5" y="118.5" width="27" height="5" fill="none" stroke="#7a7a7a"/>
<rect x="550" y="125" width="36" height="6" fill="#fff"/><rect x="589" y="125" width="9" height="6" fill="#fff"/><rect x="599.5" y="125.5" width="26" height="5" fill="none" stroke="#7a7a7a"/>
<rect x="550.5" y="132.5" width="24" height="5" fill="none" stroke="#7a7a7a"/><rect x="576" y="132" width="10" height="6" fill="#5e0520"/><rect x="589" y="132" width="19" height="6" fill="#5e0520"/><rect x="609.5" y="132.5" width="16" height="5" fill="none" stroke="#7a7a7a"/>
<rect x="550.5" y="139.5" width="11" height="5" fill="none" stroke="#7a7a7a"/><rect x="563" y="139" width="23" height="6" fill="#ee1c24"/><rect x="589" y="139" width="31" height="6" fill="#ee1c24"/>
<rect x="550.5" y="146.5" width="2" height="5" fill="none" stroke="#7a7a7a"/><rect x="554" y="146" width="32" height="6" fill="#f8b8a8"/><rect x="589" y="146" width="8" height="6" fill="#f8b8a8"/><rect x="598.5" y="146.5" width="27" height="5" fill="none" stroke="#7a7a7a"/>
<rect x="550.5" y="153.5" width="3" height="5" fill="none" stroke="#7a7a7a"/><rect x="555" y="153" width="31" height="6" fill="#f8b47c"/><rect x="589" y="153" width="9" height="6" fill="#f8b47c"/><rect x="599.5" y="153.5" width="26" height="5" fill="none" stroke="#7a7a7a"/>
<rect x="550.5" y="160.5" width="6" height="5" fill="none" stroke="#7a7a7a"/><rect x="558" y="160" width="28" height="6" fill="#f48ca8"/><rect x="589" y="160" width="14" height="6" fill="#f48ca8"/><rect x="604.5" y="160.5" width="21" height="5" fill="none" stroke="#7a7a7a"/>
<rect x="550.5" y="167.5" width="11" height="5" fill="none" stroke="#7a7a7a"/><rect x="563" y="167" width="23" height="6" fill="#e8207a"/><rect x="589" y="167" width="30" height="6" fill="#e8207a"/>
<rect x="550.5" y="174.5" width="12" height="5" fill="none" stroke="#7a7a7a"/><rect x="564" y="174" width="22" height="6" fill="#cc0a80"/><rect x="589" y="174" width="30" height="6" fill="#cc0a80"/>
<rect x="550.5" y="181.5" width="3" height="5" fill="none" stroke="#7a7a7a"/><rect x="555" y="181" width="31" height="6" fill="#e0a4f4"/><rect x="589" y="181" width="21" height="6" fill="#e0a4f4"/><rect x="611.5" y="181.5" width="14" height="5" fill="none" stroke="#7a7a7a"/>
<rect x="550.5" y="188.5" width="12" height="5" fill="none" stroke="#7a7a7a"/><rect x="564" y="188" width="22" height="6" fill="#a838b8"/><rect x="589" y="188" width="27" height="6" fill="#a838b8"/>
<rect x="550.5" y="195.5" width="17" height="5" fill="none" stroke="#7a7a7a"/><rect x="569" y="195" width="17" height="6" fill="#7a109e"/><rect x="589" y="195" width="27" height="6" fill="#7a109e"/>
<rect x="550.5" y="202.5" width="12" height="5" fill="none" stroke="#7a7a7a"/><rect x="564" y="202" width="22" height="6" fill="#6a4ef0"/><rect x="589" y="202" width="30" height="6" fill="#6a4ef0"/>
<rect x="550" y="209" width="2" height="6" fill="#7a7a7a"/><rect x="553" y="209" width="33" height="6" fill="#5cf4f0"/><rect x="589" y="209" width="20" height="6" fill="#5cf4f0"/><rect x="610.5" y="209.5" width="15" height="5" fill="none" stroke="#7a7a7a"/>
<rect x="550.5" y="216.5" width="10" height="5" fill="none" stroke="#7a7a7a"/><rect x="562" y="216" width="24" height="6" fill="#3c8ee0"/><rect x="589" y="216" width="23" height="6" fill="#3c8ee0"/><rect x="613.5" y="216.5" width="12" height="5" fill="none" stroke="#7a7a7a"/>
<rect x="550.5" y="223.5" width="18" height="5" fill="none" stroke="#7a7a7a"/><rect x="570" y="223" width="16" height="6" fill="#2a4e9c"/><rect x="589" y="223" width="21" height="6" fill="#2a4e9c"/><rect x="611.5" y="223.5" width="14" height="5" fill="none" stroke="#7a7a7a"/>
</g>
</svg>
</body></html>
